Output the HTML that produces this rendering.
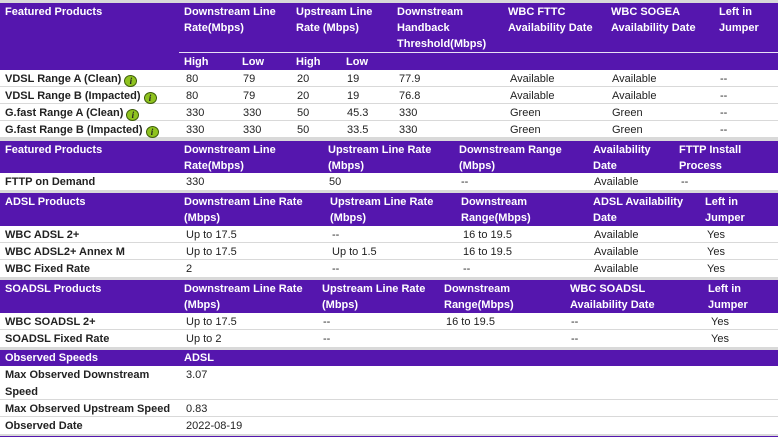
<!DOCTYPE html>
<html><head><style>
*{margin:0;padding:0;box-sizing:border-box}
body{width:778px;height:437px;background:#d9d9d9;position:relative;overflow:hidden;font-family:"Liberation Sans",sans-serif;font-size:11px;color:#222}
.b{position:absolute;left:0;width:778px}
.p{background:#5516ae;color:#fff;font-weight:bold}
.w{background:#fff}
.b span{position:absolute;line-height:17px;white-space:nowrap}
.w span{top:1px}
.w span.t{line-height:16px}
.p span{top:1px;line-height:16px}
.f{font-weight:bold}
.i{display:inline-block;width:13px;height:12px;border-radius:50%;background:#8fc31f;border:1px solid #3f5f0a;vertical-align:-2px;margin-left:3px;color:#222;font-size:9px;line-height:10px;text-align:center;font-style:italic;font-weight:bold;font-family:"Liberation Serif",serif}
</style></head><body>
<div class="b p" style="top:3px;height:67px">
<span style="left:5px">Featured Products</span>
<span style="left:184px">Downstream Line<br>Rate(Mbps)</span>
<span style="left:296px">Upstream Line<br>Rate (Mbps)</span>
<span style="left:397px">Downstream<br>Handback<br>Threshold(Mbps)</span>
<span style="left:508px">WBC FTTC<br>Availability Date</span>
<span style="left:611px">WBC SOGEA<br>Availability Date</span>
<span style="left:719px">Left in<br>Jumper</span>
<div style="position:absolute;left:179px;top:49px;width:599px;height:1px;background:#e8e0f5"></div>
<span style="left:184px;top:51px">High</span><span style="left:242px;top:51px">Low</span><span style="left:296px;top:51px">High</span><span style="left:346px;top:51px">Low</span>
</div>
<div class="b w" style="top:70px;height:16px"><span class="f" style="left:5px">VDSL Range A (Clean)<i class="i">i</i></span><span style="left:186px">80</span><span style="left:243px">79</span><span style="left:297px">20</span><span style="left:347px">19</span><span style="left:399px">77.9</span><span style="left:510px">Available</span><span style="left:612px">Available</span><span style="left:720px">--</span></div>
<div class="b w" style="top:87px;height:16px"><span class="f" style="left:5px">VDSL Range B (Impacted)<i class="i">i</i></span><span style="left:186px">80</span><span style="left:243px">79</span><span style="left:297px">20</span><span style="left:347px">19</span><span style="left:399px">76.8</span><span style="left:510px">Available</span><span style="left:612px">Available</span><span style="left:720px">--</span></div>
<div class="b w" style="top:104px;height:16px"><span class="f" style="left:5px">G.fast Range A (Clean)<i class="i">i</i></span><span style="left:186px">330</span><span style="left:243px">330</span><span style="left:297px">50</span><span style="left:347px">45.3</span><span style="left:399px">330</span><span style="left:510px">Green</span><span style="left:612px">Green</span><span style="left:720px">--</span></div>
<div class="b w" style="top:121px;height:16px"><span class="f" style="left:5px">G.fast Range B (Impacted)<i class="i">i</i></span><span style="left:186px">330</span><span style="left:243px">330</span><span style="left:297px">50</span><span style="left:347px">33.5</span><span style="left:399px">330</span><span style="left:510px">Green</span><span style="left:612px">Green</span><span style="left:720px">--</span></div>

<div class="b p" style="top:141px;height:32px"><span style="left:5px">Featured Products</span><span style="left:184px">Downstream Line<br>Rate(Mbps)</span><span style="left:328px">Upstream Line Rate<br>(Mbps)</span><span style="left:459px">Downstream Range<br>(Mbps)</span><span style="left:593px">Availability<br>Date</span><span style="left:679px">FTTP Install<br>Process</span></div>
<div class="b w" style="top:173px;height:17px"><span class="f" style="left:5px">FTTP on Demand</span><span style="left:186px">330</span><span style="left:329px">50</span><span style="left:461px">--</span><span style="left:594px">Available</span><span style="left:681px">--</span></div>

<div class="b p" style="top:193px;height:33px"><span style="left:5px">ADSL Products</span><span style="left:184px">Downstream Line Rate<br>(Mbps)</span><span style="left:330px">Upstream Line Rate<br>(Mbps)</span><span style="left:461px">Downstream<br>Range(Mbps)</span><span style="left:593px">ADSL Availability<br>Date</span><span style="left:705px">Left in<br>Jumper</span></div>
<div class="b w" style="top:226px;height:16px"><span class="f" style="left:5px">WBC ADSL 2+</span><span style="left:186px">Up to 17.5</span><span style="left:332px">--</span><span style="left:463px">16 to 19.5</span><span style="left:594px">Available</span><span style="left:707px">Yes</span></div>
<div class="b w" style="top:243px;height:16px"><span class="f" style="left:5px">WBC ADSL2+ Annex M</span><span style="left:186px">Up to 17.5</span><span style="left:332px">Up to 1.5</span><span style="left:463px">16 to 19.5</span><span style="left:594px">Available</span><span style="left:707px">Yes</span></div>
<div class="b w" style="top:260px;height:17px"><span class="f" style="left:5px">WBC Fixed Rate</span><span style="left:186px">2</span><span style="left:332px">--</span><span style="left:463px">--</span><span style="left:594px">Available</span><span style="left:707px">Yes</span></div>

<div class="b p" style="top:280px;height:33px"><span style="left:5px">SOADSL Products</span><span style="left:184px">Downstream Line Rate<br>(Mbps)</span><span style="left:322px">Upstream Line Rate<br>(Mbps)</span><span style="left:444px">Downstream<br>Range(Mbps)</span><span style="left:570px">WBC SOADSL<br>Availability Date</span><span style="left:708px">Left in<br>Jumper</span></div>
<div class="b w" style="top:313px;height:16px"><span class="f" style="left:5px">WBC SOADSL 2+</span><span style="left:186px">Up to 17.5</span><span style="left:323px">--</span><span style="left:446px">16 to 19.5</span><span style="left:571px">--</span><span style="left:711px">Yes</span></div>
<div class="b w" style="top:330px;height:17px"><span class="f" style="left:5px">SOADSL Fixed Rate</span><span style="left:186px">Up to 2</span><span style="left:323px">--</span><span style="left:571px">--</span><span style="left:711px">Yes</span></div>

<div class="b p" style="top:350px;height:16px"><span style="left:5px;top:0px">Observed Speeds</span><span style="left:184px;top:0px">ADSL</span></div>
<div class="b w" style="top:366px;height:33px"><span class="f" style="left:5px">Max Observed Downstream<br>Speed</span><span style="left:186px">3.07</span></div>
<div class="b w" style="top:400px;height:16px"><span class="f" style="left:5px">Max Observed Upstream Speed</span><span style="left:186px">0.83</span></div>
<div class="b w" style="top:417px;height:17px"><span class="f" style="left:5px">Observed Date</span><span style="left:186px">2022-08-19</span></div>
<div class="b p" style="top:436px;height:1px"></div>
</body></html>
